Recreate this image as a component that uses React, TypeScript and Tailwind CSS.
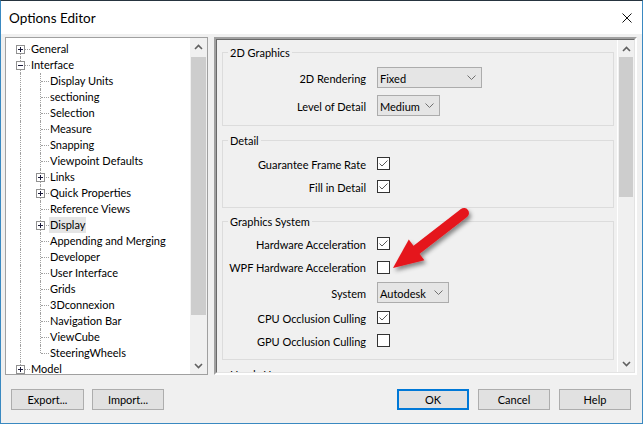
import React from 'react';

type Item = {
  label: string;
  level: 0 | 1;
  box?: '+' | '-';
  selected?: boolean;
  last?: boolean;
  first?: boolean;
};

const tree: Item[] = [
  { label: 'General', level: 0, box: '+', first: true },
  { label: 'Interface', level: 0, box: '-' },
  { label: 'Display Units', level: 1 },
  { label: 'sectioning', level: 1 },
  { label: 'Selection', level: 1 },
  { label: 'Measure', level: 1 },
  { label: 'Snapping', level: 1 },
  { label: 'Viewpoint Defaults', level: 1 },
  { label: 'Links', level: 1, box: '+' },
  { label: 'Quick Properties', level: 1, box: '+' },
  { label: 'Reference Views', level: 1 },
  { label: 'Display', level: 1, box: '+', selected: true },
  { label: 'Appending and Merging', level: 1 },
  { label: 'Developer', level: 1 },
  { label: 'User Interface', level: 1 },
  { label: 'Grids', level: 1 },
  { label: '3Dconnexion', level: 1 },
  { label: 'Navigation Bar', level: 1 },
  { label: 'ViewCube', level: 1 },
  { label: 'SteeringWheels', level: 1, last: true },
  { label: 'Model', level: 0, box: '+', last: true },
];

function Expander({ kind }: { kind: '+' | '-' }) {
  return (
    <div className="absolute left-[6px] top-[4px] w-[9px] h-[9px] border border-[#919191] bg-white">
      <div className="absolute left-[1px] top-[3px] w-[5px] h-[1px] bg-[#1a1a3a]" />
      {kind === '+' && <div className="absolute left-[3px] top-[1px] w-[1px] h-[5px] bg-[#1a1a3a]" />}
    </div>
  );
}

function TreeRow({ item }: { item: Item }) {
  return (
    <div className="flex h-[16px] items-stretch">
      <div className="relative w-[20px] shrink-0">
        {item.level === 0 && item.first && (
          <div className="absolute left-[10px] top-[8px] bottom-0 w-0 border-l border-dotted border-[#a0a0a0]" />
        )}
        {item.level === 0 && item.last && (
          <div className="absolute left-[10px] top-0 h-[8px] w-0 border-l border-dotted border-[#a0a0a0]" />
        )}
        {((item.level === 0 && !item.first && !item.last) || item.level === 1) && (
          <div className="absolute left-[10px] top-0 bottom-0 w-0 border-l border-dotted border-[#a0a0a0]" />
        )}
        {item.level === 0 && (
          <div className="absolute left-[11px] right-0 top-[8px] h-0 border-t border-dotted border-[#a0a0a0]" />
        )}
        {item.level === 0 && item.box && <Expander kind={item.box} />}
      </div>
      {item.level === 1 && (
        <div className="relative w-[19px] shrink-0">
          {item.last ? (
            <div className="absolute left-[10px] top-0 h-[8px] w-0 border-l border-dotted border-[#a0a0a0]" />
          ) : (
            <div className="absolute left-[10px] top-0 bottom-0 w-0 border-l border-dotted border-[#a0a0a0]" />
          )}
          <div className="absolute left-[11px] right-0 top-[8px] h-0 border-t border-dotted border-[#a0a0a0]" />
          {item.box && <Expander kind={item.box} />}
        </div>
      )}
      <span
        className={`leading-[16px] px-[1px] whitespace-nowrap ${item.selected ? 'bg-[#e5e5e5]' : ''}`}
      >
        {item.label}
      </span>
    </div>
  );
}

function ChevUp() {
  return (
    <svg width="9" height="6" viewBox="0 0 9 6">
      <polyline points="1,5 4.5,1.5 8,5" fill="none" stroke="#606060" strokeWidth="1.6" />
    </svg>
  );
}

function ChevDown() {
  return (
    <svg width="9" height="6" viewBox="0 0 9 6">
      <polyline points="1,1 4.5,4.5 8,1" fill="none" stroke="#606060" strokeWidth="1.6" />
    </svg>
  );
}

function SelChev() {
  return (
    <svg width="9" height="5" viewBox="0 0 9 5">
      <polyline points="0.5,0.5 4.5,4.5 8.5,0.5" fill="none" stroke="#707070" strokeWidth="1" />
    </svg>
  );
}

function Checkbox({ checked }: { checked?: boolean }) {
  return (
    <div className="w-[13px] h-[13px] border border-[#333333] bg-white flex items-center justify-center">
      {checked && (
        <svg width="11" height="11" viewBox="0 0 11 11">
          <polyline points="1.5,5.5 4,8 9.5,2.5" fill="none" stroke="#5a5a5a" strokeWidth="1" />
        </svg>
      )}
    </div>
  );
}

function Select({ value, width }: { value: string; width: string }) {
  return (
    <div
      className={`h-[21px] ${width} border border-[#acacac] bg-[#e5e5e5] flex items-center justify-between pl-[2px] pr-[5px]`}
    >
      <span className="leading-[16px] pt-[2px]">{value}</span>
      <SelChev />
    </div>
  );
}

function Row({ label, h, children }: { label: string; h: string; children: React.ReactNode }) {
  return (
    <div className={`flex items-center ${h}`}>
      <div className="w-[143px] text-right leading-[16px] pt-[2px] whitespace-nowrap">{label}</div>
      <div className="ml-[11px]">{children}</div>
    </div>
  );
}

function Group({
  title,
  className,
  children,
}: {
  title: string;
  className: string;
  children?: React.ReactNode;
}) {
  return (
    <div className={`relative border border-[#dcdcdc] shrink-0 ${className}`}>
      <div className="absolute -top-[9px] left-[5px] px-[2px] pt-[1px] bg-[#f0f0f0] leading-[16px] whitespace-nowrap">
        {title}
      </div>
      {children}
    </div>
  );
}

function Button({ label, primary, width }: { label: string; primary?: boolean; width: string }) {
  return (
    <div
      className={`h-[21px] ${width} bg-[#e1e1e1] flex items-center justify-center leading-[16px] pt-[1px] ${
        primary ? 'border-2 border-[#0078d7]' : 'border border-[#adadad]'
      }`}
    >
      {label}
    </div>
  );
}

export default function App() {
  return (
    <div className="relative w-[643px] h-[424px] flex flex-col border border-[#3a89c1] border-t-[#26343f] bg-[#f0f0f0] font-['Lato','Liberation_Sans',sans-serif] text-[11px] text-black overflow-hidden">
      {/* title bar */}
      <div className="h-[33px] shrink-0 bg-white flex items-center justify-between pl-[8px] pr-[10px]">
        <span className="text-[13.5px] leading-[18px]">Options Editor</span>
        <svg width="10" height="10" viewBox="0 0 10 10">
          <line x1="0.5" y1="0.5" x2="9.5" y2="9.5" stroke="#111" strokeWidth="1" />
          <line x1="9.5" y1="0.5" x2="0.5" y2="9.5" stroke="#111" strokeWidth="1" />
        </svg>
      </div>

      {/* body */}
      <div className="flex flex-col flex-1 px-[4px] pt-[3px]">
        <div className="flex gap-[6px] h-[338px]">
          {/* tree */}
          <div className="w-[203px] h-full border border-[#a0a0a0] bg-white flex">
            <div className="flex-1 overflow-hidden pt-[3px] pl-[4px]">
              {tree.map((it) => (
                <TreeRow key={it.label} item={it} />
              ))}
            </div>
            <div className="w-[17px] bg-[#f0f0f0] flex flex-col">
              <div className="h-[17px] flex items-center justify-center">
                <ChevUp />
              </div>
              <div className="mt-[2px] h-[258px] mx-[1px] bg-[#cdcdcd]" />
              <div className="flex-1" />
              <div className="h-[17px] flex items-center justify-center">
                <ChevDown />
              </div>
            </div>
          </div>

          {/* right panel */}
          <div className="w-[423px] h-full border-2 border-t-[#a0a0a0] border-l-[#a0a0a0] border-r-white border-b-white">
            <div className="h-full border border-t-[#696969] border-l-[#696969] border-r-[#e3e3e3] border-b-[#e3e3e3] flex overflow-hidden">
              <div className="flex-1 overflow-hidden pl-[5px] pr-[3px] pt-[12px] flex flex-col">
                <Group title="2D Graphics" className="pt-[14px] pb-[9px]">
                  <Row label="2D Rendering" h="h-[21px]">
                    <Select value="Fixed" width="w-[105px]" />
                  </Row>
                  <div className="h-[7px]" />
                  <Row label="Level of Detail" h="h-[21px]">
                    <Select value="Medium" width="w-[63px]" />
                  </Row>
                </Group>
                <Group title="Detail" className="mt-[14px] pt-[11px] pb-[9px]">
                  <Row label="Guarantee Frame Rate" h="h-[23px]">
                    <Checkbox checked />
                  </Row>
                  <Row label="Fill in Detail" h="h-[23px]">
                    <Checkbox checked />
                  </Row>
                </Group>
                <Group title="Graphics System" className="mt-[13px] pt-[10px] pb-[7px]">
                  <Row label="Hardware Acceleration" h="h-[23px]">
                    <Checkbox checked />
                  </Row>
                  <Row label="WPF Hardware Acceleration" h="h-[24px]">
                    <Checkbox />
                  </Row>
                  <Row label="System" h="h-[27px]">
                    <Select value="Autodesk" width="w-[72px]" />
                  </Row>
                  <Row label="CPU Occlusion Culling" h="h-[23px]">
                    <Checkbox checked />
                  </Row>
                  <Row label="GPU Occlusion Culling" h="h-[23px]">
                    <Checkbox />
                  </Row>
                </Group>
                <Group title="Heads Up" className="mt-[14px] h-[60px]" />
              </div>
              <div className="w-[17px] shrink-0 bg-[#f0f0f0] border-l border-white flex flex-col">
                <div className="h-[17px] flex items-center justify-center">
                  <ChevUp />
                </div>
                <div className="h-[140px] mx-[1px] bg-[#cdcdcd]" />
                <div className="flex-1" />
                <div className="h-[17px] flex items-center justify-center">
                  <ChevDown />
                </div>
              </div>
            </div>
          </div>
        </div>

        {/* buttons */}
        <div className="flex mt-[14px] pl-[6px] pr-[7px]">
          <Button label="Export..." width="w-[73px]" />
          <div className="ml-[8px]">
            <Button label="Import..." width="w-[72px]" />
          </div>
          <div className="flex-1" />
          <div className="flex gap-[9px]">
            <Button label="OK" width="w-[72px]" primary />
            <Button label="Cancel" width="w-[72px]" />
            <Button label="Help" width="w-[72px]" />
          </div>
        </div>
      </div>

      {/* red annotation arrow */}
      <svg className="absolute left-0 top-0 pointer-events-none" width="643" height="424">
        <defs>
          <filter id="arrowShadow" x="-30%" y="-30%" width="160%" height="160%">
            <feDropShadow dx="2" dy="3" stdDeviation="2" floodColor="#000000" floodOpacity="0.45" />
          </filter>
        </defs>
        <g filter="url(#arrowShadow)">
          <line x1="463" y1="212" x2="414" y2="250" stroke="#e5161c" strokeWidth="10" strokeLinecap="round" />
          <polygon points="392,267 407.8,238.4 423.4,259.2" fill="#e5161c" />
        </g>
      </svg>
    </div>
  );
}
